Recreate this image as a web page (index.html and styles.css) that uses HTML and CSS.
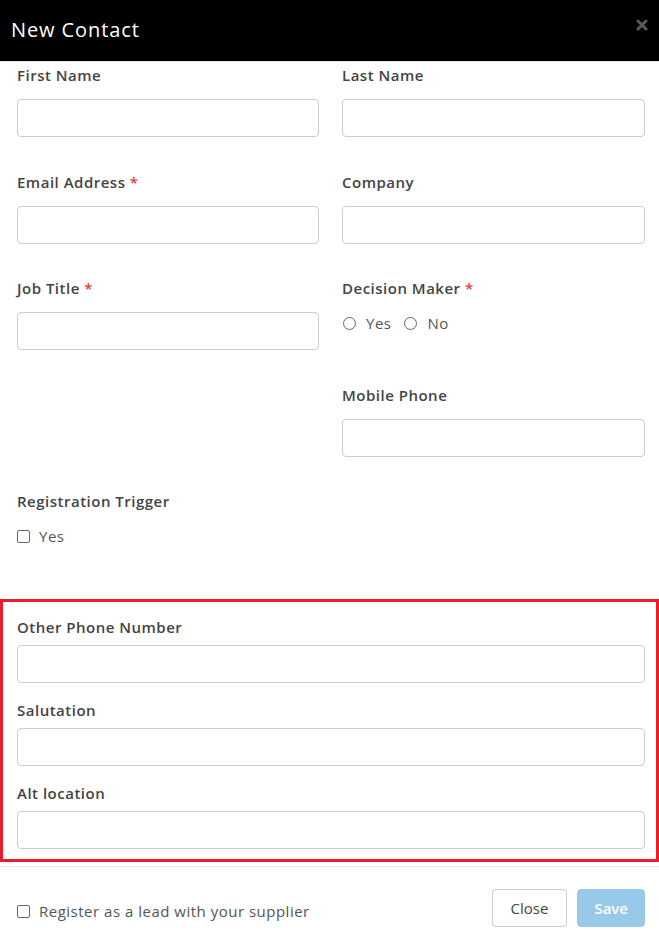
FILE: index.html
```html
<!DOCTYPE html>
<html lang="en">
<head>
    <meta charset="UTF-8">
    <meta name="viewport" content="width=device-width, initial-scale=1.0">
    <title>New Contact</title>
    <link rel="stylesheet" href="styles.css">
</head>
<body>
    <div class="modal">
        <div class="modal-header">
            <h2>New Contact</h2>
            <button class="close-x" aria-label="Close">
                <svg width="12" height="12" viewBox="0 0 12 12">
                    <path d="M2 2 L10 10 M10 2 L2 10" stroke="#5a5a5a" stroke-width="3" stroke-linecap="round"/>
                </svg>
            </button>
        </div>

        <div class="modal-body">
            <div class="form-grid">
                <div class="form-group">
                    <label>First Name</label>
                    <input type="text" class="form-control">
                </div>
                <div class="form-group">
                    <label>Last Name</label>
                    <input type="text" class="form-control">
                </div>

                <div class="form-group">
                    <label>Email Address <span class="req">*</span></label>
                    <input type="text" class="form-control">
                </div>
                <div class="form-group">
                    <label>Company</label>
                    <input type="text" class="form-control">
                </div>

                <div class="form-group">
                    <label>Job Title <span class="req">*</span></label>
                    <input type="text" class="form-control">
                </div>
                <div class="form-group">
                    <label>Decision Maker <span class="req">*</span></label>
                    <div class="choice-row">
                        <span class="choice"><span class="radio"></span>Yes</span>
                        <span class="choice"><span class="radio"></span>No</span>
                    </div>
                </div>

                <div class="form-group"></div>
                <div class="form-group">
                    <label>Mobile Phone</label>
                    <input type="text" class="form-control">
                </div>

                <div class="form-group short">
                    <label>Registration Trigger</label>
                    <div class="choice-row">
                        <span class="choice"><span class="check"></span>Yes</span>
                    </div>
                </div>
            </div>
        </div>

        <div class="extra-fields">
            <div class="form-group tight">
                <label>Other Phone Number</label>
                <input type="text" class="form-control">
            </div>
            <div class="form-group tight">
                <label>Salutation</label>
                <input type="text" class="form-control">
            </div>
            <div class="form-group tight">
                <label>Alt location</label>
                <input type="text" class="form-control">
            </div>
        </div>

        <div class="modal-footer">
            <span class="choice lead"><span class="check"></span>Register as a lead with your supplier</span>
            <div class="buttons">
                <button class="btn btn-default">Close</button>
                <button class="btn btn-primary">Save</button>
            </div>
        </div>
    </div>
</body>
</html>
```

FILE: styles.css
```css
body {
    margin: 0;
    font-family: 'Open Sans', 'Liberation Sans', sans-serif;
    color: #444;
    background-color: #fff;
    letter-spacing: 0.5px;
}

.modal {
    width: 659px;
}

.modal-header {
    background-color: #000;
    height: 62px;
    display: flex;
    justify-content: space-between;
    align-items: flex-start;
    border-bottom: 1px solid #e5e5e5;
    box-sizing: border-box;
}

.modal-header h2 {
    margin: 16px 0 0 11px;
    color: #fff;
    font-size: 20px;
    font-weight: 500;
    line-height: 28px;
    letter-spacing: 0.9px;
}

.close-x {
    background: none;
    border: none;
    padding: 0;
    margin: 19px 11px 0 0;
    line-height: 0;
}

.modal-body {
    padding: 2px 14px 0 17px;
}

.form-grid {
    display: grid;
    grid-template-columns: 302px 303px;
    column-gap: 23px;
}

.form-group {
    height: 106.5px;
}

.form-group.short {
    height: 109px;
}

.form-group.tight {
    height: 83px;
}

.form-group label {
    display: block;
    font-size: 15px;
    font-weight: 600;
    line-height: 22px;
    margin-bottom: 13px;
    color: #444;
}

.form-group.tight label {
    margin-bottom: 7px;
}

.req {
    color: #e53935;
}

.form-control {
    display: block;
    width: 100%;
    height: 38px;
    box-sizing: border-box;
    border: 1px solid #ccc;
    border-radius: 4px;
    margin: 0;
    padding: 6px 12px;
    font: inherit;
}

.choice-row {
    display: flex;
    gap: 12px;
    margin-top: 1px;
}

.choice {
    display: inline-flex;
    align-items: center;
    font-size: 15px;
    color: #555;
    line-height: 22px;
}

.radio {
    width: 11px;
    height: 11px;
    border: 1px solid #666;
    border-radius: 50%;
    margin: 0 10px 0 1px;
}

.check {
    width: 11px;
    height: 11px;
    border: 1px solid #666;
    border-radius: 2px;
    margin: 0 9px 0 0;
}

.extra-fields {
    border: 3px solid #ec1c2c;
    padding: 14px 11px 0 14px;
    height: 263px;
    box-sizing: border-box;
}

.modal-footer {
    margin-top: 4px;
    border-top: 1px solid #e5e5e5;
    padding: 22px 14px 0 17px;
    display: flex;
    justify-content: space-between;
    align-items: center;
}

.lead {
    margin-top: 6px;
}

.buttons {
    display: flex;
    gap: 10px;
}

.btn {
    height: 38px;
    padding: 0 16px;
    font: inherit;
    font-size: 15px;
    border-radius: 4px;
    cursor: pointer;
}

.btn-default {
    background-color: #fff;
    border: 1px solid #ccc;
    color: #444;
    padding: 0 18px;
}

.btn-primary {
    background-color: #98c9e8;
    border: 1px solid #98c9e8;
    color: #fff;
    font-weight: 600;
}
```
